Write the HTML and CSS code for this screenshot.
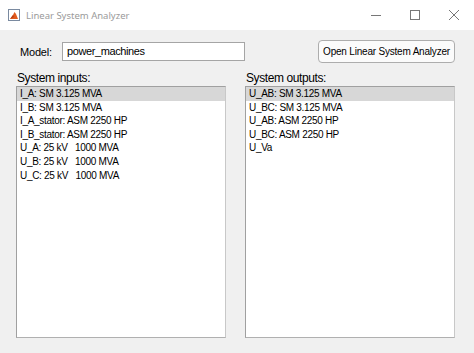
FILE: index.html
```html
<!DOCTYPE html>
<html>
<head>
  <meta charset="UTF-8">
  <title>Linear System Analyzer</title>
  <link rel="stylesheet" href="styles.css">
</head>
<body>
  <div class="window">
    <!-- Title bar -->
    <div class="titlebar">
      <svg class="app-icon" width="12" height="12" viewBox="0 0 12 12">
        <rect x="0.5" y="0.5" width="11" height="11" fill="#fff" stroke="#7a8aa0"/>
        <path d="M2 10 L5 6 L6.5 3 L8 5 L10 10 Z" fill="#e05a1c"/>
        <path d="M2 10 L5 6 L6 8 Z" fill="#b83a10"/>
      </svg>
      <span class="title">Linear System Analyzer</span>
      <div class="controls">
        <svg width="10" height="10" viewBox="0 0 10 10"><path d="M0 5.5 H10" stroke="#777" stroke-width="1"/></svg>
        <svg width="10" height="10" viewBox="0 0 10 10"><rect x="0.5" y="0.5" width="9" height="9" fill="none" stroke="#777"/></svg>
        <svg width="10" height="10" viewBox="0 0 10 10"><path d="M0 0 L10 10 M10 0 L0 10" stroke="#777" stroke-width="1"/></svg>
      </div>
    </div>

    <div class="content">
      <div class="top-row">
        <label class="model-label">Model:</label>
        <div class="model-field">power_machines</div>
        <button class="open-button">Open Linear System Analyzer</button>
      </div>

      <div class="lists">
        <div class="column">
          <div class="list-label">System inputs:</div>
          <ul class="listbox">
            <li class="selected">I_A: SM 3.125 MVA</li>
            <li>I_B: SM 3.125 MVA</li>
            <li>I_A_stator: ASM 2250 HP</li>
            <li>I_B_stator: ASM 2250 HP</li>
            <li>U_A: 25 kV   1000 MVA</li>
            <li>U_B: 25 kV   1000 MVA</li>
            <li>U_C: 25 kV   1000 MVA</li>
          </ul>
        </div>
        <div class="column">
          <div class="list-label">System outputs:</div>
          <ul class="listbox">
            <li class="selected">U_AB: SM 3.125 MVA</li>
            <li>U_BC: SM 3.125 MVA</li>
            <li>U_AB: ASM 2250 HP</li>
            <li>U_BC: ASM 2250 HP</li>
            <li>U_Va</li>
          </ul>
        </div>
      </div>
    </div>
  </div>
</body>
</html>
```
FILE: styles.css
```css
body {
  margin: 0;
  background: #f0f0f0;
  font-family: "Liberation Sans", Arial, sans-serif;
  color: #000;
}

.window {
  width: 474px;
  height: 353px;
  display: flex;
  flex-direction: column;
  overflow: hidden;
}

.titlebar {
  height: 30px;
  background: #fff;
  display: flex;
  align-items: center;
  padding-left: 8px;
  flex-shrink: 0;
}

.app-icon {
  margin-right: 6px;
}

.title {
  font-family: "Noto Sans", "Open Sans", sans-serif;
  font-size: 9.5px;
  color: #9a9a9a;
}

.controls {
  margin-left: auto;
  display: flex;
  align-items: center;
  gap: 29px;
  padding-right: 15px;
}

.content {
  flex: 1;
  padding: 10px 19px 15px 16px;
  display: flex;
  flex-direction: column;
}

.top-row {
  display: flex;
  align-items: center;
  height: 23px;
}

.model-label {
  font-size: 11px;
  letter-spacing: -0.2px;
  margin-left: 4px;
  width: 42px;
}

.model-field {
  width: 177px;
  height: 17px;
  border: 1px solid #a5a5a5;
  background: #fff;
  font-size: 11px;
  letter-spacing: -0.4px;
  line-height: 17px;
  padding-left: 4px;
}

.open-button {
  margin-left: auto;
  width: 137px;
  height: 23px;
  border: 1px solid #adadad;
  border-radius: 4px;
  background: #fbfbfb;
  font-family: "Liberation Sans", Arial, sans-serif;
  font-size: 10px;
  letter-spacing: -0.2px;
  white-space: nowrap;
  color: #000;
  padding: 0;
}

.lists {
  flex: 1;
  display: flex;
  gap: 19px;
  margin-top: 8px;
}

.column {
  flex: 1;
  display: flex;
  flex-direction: column;
}

.list-label {
  font-size: 12px;
  letter-spacing: -0.4px;
  height: 15px;
  line-height: 15px;
  margin-left: 1px;
}

.listbox {
  flex: 1;
  margin: 0;
  padding: 0;
  list-style: none;
  background: #fff;
  border: 1px solid #a0a0a0;
  border-right-color: #c8c8c8;
  border-bottom-color: #b0b0b0;
}

.listbox li {
  font-size: 10px;
  letter-spacing: -0.3px;
  height: 13.6px;
  line-height: 13.6px;
  padding-left: 3px;
  white-space: pre;
}

.listbox li.selected {
  background: #d7d7d7;
}
```
